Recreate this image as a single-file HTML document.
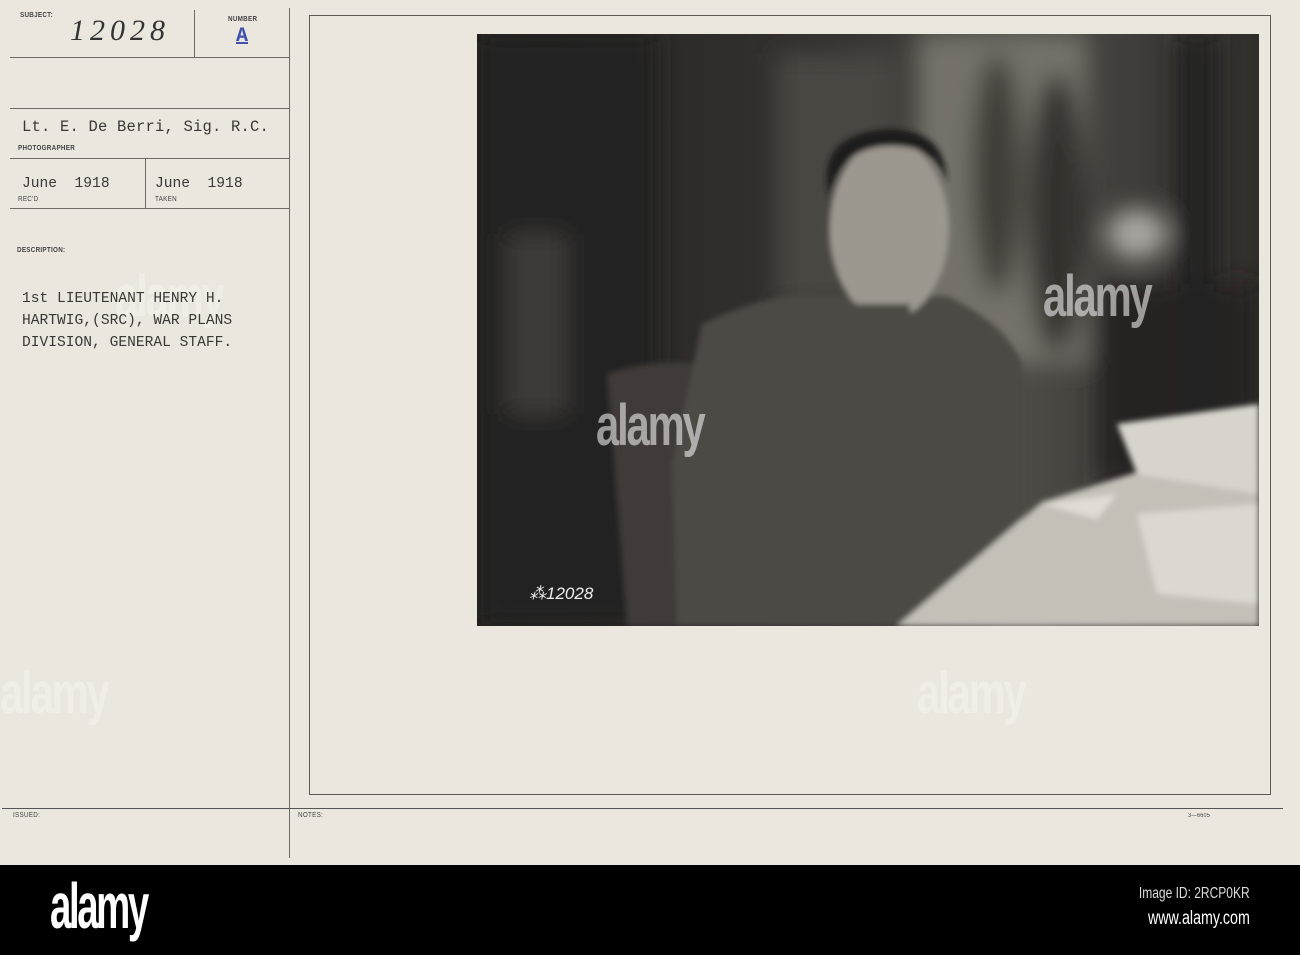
<!DOCTYPE html>
<html><head><meta charset="utf-8"><style>
body{margin:0;width:1300px;height:955px;overflow:hidden;background:#ebe7e0;position:relative;font-family:"Liberation Sans",sans-serif}
.a{position:absolute}
.h{position:absolute;height:1px;background:#6e6b66}
.v{position:absolute;width:1px;background:#6e6b66}
.lab{position:absolute;font-size:7px;font-weight:bold;color:#444;letter-spacing:.3px;transform:scaleX(.9);transform-origin:left}
.tw{position:absolute;font-family:"Liberation Mono",monospace;font-size:14.6px;color:#3a3836;white-space:pre}
.wm{position:absolute;font-family:"Liberation Sans",sans-serif;font-weight:bold;font-size:58px;letter-spacing:-3px;transform:scaleX(.72);transform-origin:left;color:rgba(255,255,255,.55)}
</style></head><body>
<div class="a" style="left:0;top:0;width:1300px;height:865px;background:#ebe7df"></div>
<div class="v" style="left:289px;top:8px;height:850px"></div>
<div class="v" style="left:194px;top:10px;height:47px"></div>
<div class="h" style="left:10px;top:57px;width:280px"></div>
<div class="h" style="left:10px;top:108px;width:280px"></div>
<div class="h" style="left:10px;top:158px;width:280px"></div>
<div class="v" style="left:145px;top:158px;height:50px"></div>
<div class="h" style="left:10px;top:208px;width:280px"></div>
<div class="h" style="left:2px;top:808px;width:1281px;background:#555"></div>
<div class="a" style="left:309px;top:15px;width:962px;height:780px;border:1px solid #5e5b56;box-sizing:border-box"></div>
<div class="lab" style="left:20px;top:12px">SUBJECT:</div>
<div class="a" style="left:70px;top:14px;font-family:'Liberation Serif',serif;font-style:italic;font-size:30px;color:#333;letter-spacing:5px">12028</div>
<div class="lab" style="left:228px;top:16px">NUMBER</div>
<div class="a" style="left:236px;top:25px;font-family:'Liberation Mono',monospace;font-weight:bold;font-size:20px;color:#4050b0;text-decoration:underline">A</div>
<div class="wm" style="left:115px;top:263px;color:rgba(255,255,255,.3)">alamy</div>
<div class="wm" style="left:0px;top:660px;color:rgba(255,255,255,.3)">alamy</div>
<div class="wm" style="left:917px;top:660px;color:rgba(255,255,255,.3)">alamy</div>
<div class="tw" style="left:22px;top:118px;font-size:15.5px;letter-spacing:.2px">Lt. E. De Berri, Sig. R.C.</div>
<div class="lab" style="left:18px;top:145px">PHOTOGRAPHER</div>
<div class="tw" style="left:22px;top:176px">June  1918</div>
<div class="lab" style="left:18px;top:196px;font-weight:normal">REC'D</div>
<div class="tw" style="left:155px;top:176px">June  1918</div>
<div class="lab" style="left:155px;top:196px;font-weight:normal">TAKEN</div>
<div class="lab" style="left:17px;top:247px">DESCRIPTION:</div>
<div class="tw" style="left:22px;top:288px;line-height:22px">1st LIEUTENANT HENRY H.
HARTWIG,(SRC), WAR PLANS
DIVISION, GENERAL STAFF.</div>
<div class="lab" style="left:13px;top:812px;font-weight:normal">ISSUED:</div>
<div class="lab" style="left:298px;top:812px;font-weight:normal">NOTES:</div>
<div class="lab" style="left:1188px;top:813px;font-weight:normal;font-size:6px">3—6605</div>
<svg class="a" style="left:477px;top:34px" width="782" height="592" viewBox="0 0 782 592">
<defs>
<filter id="b"><feGaussianBlur stdDeviation="12"/></filter>
<filter id="b2"><feGaussianBlur stdDeviation="3"/></filter>
<linearGradient id="bg" x1="0" x2="1"><stop offset="0" stop-color="#252321"/><stop offset=".45" stop-color="#34312e"/><stop offset=".7" stop-color="#4e4a46"/><stop offset="1" stop-color="#302d2a"/></linearGradient>
</defs>
<rect width="782" height="592" fill="url(#bg)"/>
<g filter="url(#b)">
<rect x="0" y="0" width="180" height="592" fill="#222020"/>
<rect x="440" y="0" width="170" height="330" fill="#75716b"/>
<rect x="300" y="20" width="120" height="250" fill="#4a4642"/>
<rect x="30" y="200" width="60" height="180" fill="#3e3a37"/>
<ellipse cx="520" cy="140" rx="25" ry="120" fill="#403c38"/>
<ellipse cx="580" cy="180" rx="30" ry="140" fill="#34302d"/>
<ellipse cx="660" cy="200" rx="30" ry="25" fill="#aaa6a0"/>
<rect x="620" y="250" width="160" height="200" fill="#262422"/>
<rect x="700" y="0" width="40" height="400" fill="#232120"/>
</g>
<g filter="url(#b2)">
<path d="M130 340 Q170 325 228 330 L232 592 L150 592 Z" fill="#3f3b37"/>
<path d="M225 290 Q300 255 345 262 L470 262 Q530 290 545 330 L545 500 L450 592 L200 592 L195 430 Z" fill="#4d4944"/>
<path d="M420 592 L565 468 L782 400 L782 592 Z" fill="#c4c0b8"/>
<path d="M640 390 L782 370 L782 460 L660 440 Z" fill="#d8d4cd"/>
<path d="M660 480 L782 470 L782 570 L680 560 Z" fill="#dcd8d1"/>
<path d="M565 470 L640 460 L620 485 Z" fill="#e0dcd4"/>
<ellipse cx="412" cy="195" rx="60" ry="90" fill="#9c978f"/>
<path d="M350 150 Q345 100 410 95 Q470 95 470 150 Q460 110 410 112 Q360 115 352 165 Z" fill="#1c1b1a"/>
<rect x="345" y="270" width="88" height="40" fill="#4d4944"/>
</g>
<text x="52" y="565" font-family="Liberation Sans,sans-serif" font-size="17" fill="#eee" font-style="italic">⁂12028</text>
</svg>
<div class="wm" style="left:1043px;top:263px">alamy</div>
<div class="wm" style="left:596px;top:392px">alamy</div>
<div class="a" style="left:0;top:865px;width:1300px;height:90px;background:#000"></div>
<div class="a" style="left:50px;top:869px;color:#fff;font-size:64px;font-weight:bold;letter-spacing:-4px;transform:scaleX(.6);transform-origin:left;font-family:'Liberation Sans',sans-serif">alamy</div>
<div class="a" style="right:50px;top:885px;color:#ddd;font-size:16px;transform:scaleX(.75);transform-origin:right">Image ID: 2RCP0KR</div>
<div class="a" style="right:50px;top:908px;color:#fff;font-size:19px;transform:scaleX(.75);transform-origin:right">www.alamy.com</div>
</body></html>
